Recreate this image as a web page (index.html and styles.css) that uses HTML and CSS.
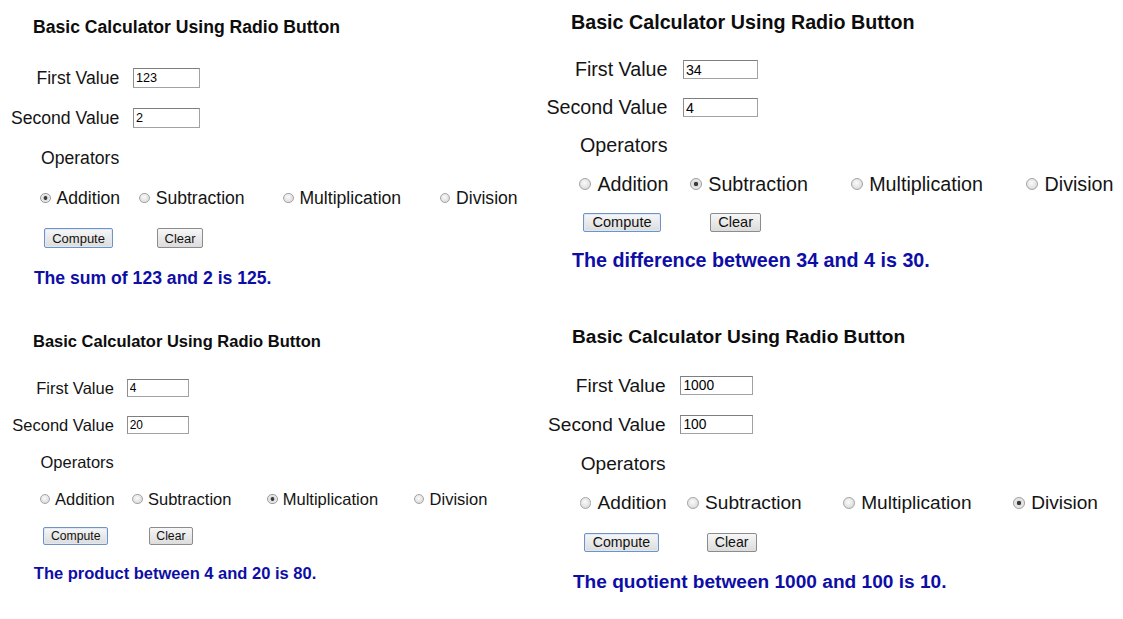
FILE: index.html
```html
<!DOCTYPE html>
<html lang="en">
<head>
<meta charset="utf-8">
<title>Basic Calculator Using Radio Button</title>
<link rel="stylesheet" href="styles.css">
</head>
<body>
<div class="sheet">

  <section class="panel p1">
    <h2 class="title">Basic Calculator Using Radio Button</h2>
    <div class="form">
      <label class="lbl">First Value</label><input class="val" type="text" value="123">
      <label class="lbl">Second Value</label><input class="val" type="text" value="2">
      <span class="lbl">Operators</span><span></span>
    </div>
    <div class="ops">
      <label class="op"><input type="radio" name="op1" checked><span>Addition</span></label>
      <label class="op"><input type="radio" name="op1"><span>Subtraction</span></label>
      <label class="op"><input type="radio" name="op1"><span>Multiplication</span></label>
      <label class="op"><input type="radio" name="op1"><span>Division</span></label>
    </div>
    <div class="btns">
      <button class="btn btn-default">Compute</button>
      <button class="btn btn-clear">Clear</button>
    </div>
    <p class="result">The sum of 123 and 2 is 125.</p>
  </section>

  <section class="panel p2">
    <h2 class="title">Basic Calculator Using Radio Button</h2>
    <div class="form">
      <label class="lbl">First Value</label><input class="val" type="text" value="34">
      <label class="lbl">Second Value</label><input class="val" type="text" value="4">
      <span class="lbl">Operators</span><span></span>
    </div>
    <div class="ops">
      <label class="op"><input type="radio" name="op2"><span>Addition</span></label>
      <label class="op"><input type="radio" name="op2" checked><span>Subtraction</span></label>
      <label class="op"><input type="radio" name="op2"><span>Multiplication</span></label>
      <label class="op"><input type="radio" name="op2"><span>Division</span></label>
    </div>
    <div class="btns">
      <button class="btn btn-default">Compute</button>
      <button class="btn btn-clear">Clear</button>
    </div>
    <p class="result">The difference between 34 and 4 is 30.</p>
  </section>

  <section class="panel p3">
    <h2 class="title">Basic Calculator Using Radio Button</h2>
    <div class="form">
      <label class="lbl">First Value</label><input class="val" type="text" value="4">
      <label class="lbl">Second Value</label><input class="val" type="text" value="20">
      <span class="lbl">Operators</span><span></span>
    </div>
    <div class="ops">
      <label class="op"><input type="radio" name="op3"><span>Addition</span></label>
      <label class="op"><input type="radio" name="op3"><span>Subtraction</span></label>
      <label class="op"><input type="radio" name="op3" checked><span>Multiplication</span></label>
      <label class="op"><input type="radio" name="op3"><span>Division</span></label>
    </div>
    <div class="btns">
      <button class="btn btn-default">Compute</button>
      <button class="btn btn-clear">Clear</button>
    </div>
    <p class="result">The product between 4 and 20 is 80.</p>
  </section>

  <section class="panel p4">
    <h2 class="title">Basic Calculator Using Radio Button</h2>
    <div class="form">
      <label class="lbl">First Value</label><input class="val" type="text" value="1000">
      <label class="lbl">Second Value</label><input class="val" type="text" value="100">
      <span class="lbl">Operators</span><span></span>
    </div>
    <div class="ops">
      <label class="op"><input type="radio" name="op4"><span>Addition</span></label>
      <label class="op"><input type="radio" name="op4"><span>Subtraction</span></label>
      <label class="op"><input type="radio" name="op4"><span>Multiplication</span></label>
      <label class="op"><input type="radio" name="op4" checked><span>Division</span></label>
    </div>
    <div class="btns">
      <button class="btn btn-default">Compute</button>
      <button class="btn btn-clear">Clear</button>
    </div>
    <p class="result">The quotient between 1000 and 100 is 10.</p>
  </section>

</div>
</body>
</html>
```
FILE: styles.css
```css
* { box-sizing: border-box; }

html, body {
  margin: 0;
  padding: 0;
  background: #ffffff;
}

body {
  font-family: "Liberation Sans", Arial, sans-serif;
  color: #111111;
}

.sheet {
  width: 1123px;
  height: 619px;
  display: grid;
  grid-template-columns: 540px 583px;
  grid-template-rows: 314px 305px;
  overflow: hidden;
}

.panel {
  --fs: 17.6px;
  --row: 40px;
  --pad: 33px;
  --top: 6px;
  --tgap: 11px;
  font-size: var(--fs);
  padding-top: var(--top);
}

.p1 { --fs: 17.6px; --row: 40px;   --pad: 33px; --top: 7px;   --tgap: 11px; }
.p2 { --fs: 19.7px; --row: 38.2px; --pad: 31px; --top: 2.5px; --tgap: 9.8px; }
.p3 { --fs: 16.5px; --row: 37px;   --pad: 33px; --top: 8.5px; --tgap: 10px; }
.p4 { --fs: 19.1px; --row: 39.2px; --pad: 32px; --top: 3px;   --tgap: 9.8px; }

.title {
  margin: 0 0 var(--tgap) var(--pad);
  height: var(--row);
  line-height: var(--row);
  font-size: var(--fs);
  font-weight: bold;
  color: #0d0d0d;
  white-space: nowrap;
}

.form {
  display: grid;
  grid-template-columns: calc(var(--pad) + var(--fs) * 4.9) auto;
  grid-auto-rows: var(--row);
  column-gap: calc(var(--fs) * 0.78);
  align-items: center;
}

.lbl {
  text-align: right;
  white-space: nowrap;
  color: #141414;
}

.val {
  width: calc(var(--fs) * 3.8);
  height: calc(var(--row) * 0.49);
  font-family: "Liberation Sans", Arial, sans-serif;
  font-size: calc(var(--fs) * 0.72);
  padding: 0 2px;
  border: 1px solid #a2a2a2;
  border-top-color: #7e7e7e;
  border-left-color: #8e8e8e;
  color: #000;
  background: #fff;
  outline: none;
}

.ops {
  display: grid;
  grid-template-columns: calc(var(--fs) * 5.63) calc(var(--fs) * 8.17) calc(var(--fs) * 8.9) auto;
  height: var(--row);
  align-items: center;
  margin-left: calc(var(--pad) + var(--fs) * 0.4);
}

.op {
  display: flex;
  align-items: center;
  gap: calc(var(--fs) * 0.32);
  white-space: nowrap;
  color: #141414;
}

.op input {
  -webkit-appearance: none;
  appearance: none;
  margin: 0;
  width: calc(var(--fs) * 0.62);
  height: calc(var(--fs) * 0.62);
  border-radius: 50%;
  border: 1px solid #a4a4a4;
  background: radial-gradient(circle at 45% 40%, #fbfbfb 0%, #e4e4e4 55%, #cfcfcf 100%);
  flex: none;
}

.op input:checked {
  background: radial-gradient(circle, #3a3a3a 0%, #3a3a3a 26%, #dcdcdc 36%, #ececec 70%, #d2d2d2 100%);
  border-color: #9a9a9a;
}

.btns {
  display: flex;
  align-items: center;
  height: var(--row);
  margin-left: calc(var(--pad) + var(--fs) * 0.63);
  gap: calc(var(--fs) * 2.5);
}

.btn {
  height: calc(var(--row) * 0.5);
  font-family: "Liberation Sans", Arial, sans-serif;
  font-size: calc(var(--fs) * 0.74);
  color: #111;
  padding: 0;
  border-radius: 2px;
  background: linear-gradient(#f7f7f7, #e9e9e9 50%, #dcdcdc);
}

.btn-default {
  width: calc(var(--fs) * 3.92);
  border: 1px solid #6f93c9;
  box-shadow: inset 0 0 0 1px #dfe8f6;
}

.btn-clear {
  width: calc(var(--fs) * 2.62);
  border: 1px solid #8c8c8c;
}

.result {
  margin: 0 0 0 calc(var(--pad) + var(--fs) * 0.05);
  height: var(--row);
  line-height: var(--row);
  font-weight: bold;
  color: #0e0ea6;
  white-space: nowrap;
}
```
